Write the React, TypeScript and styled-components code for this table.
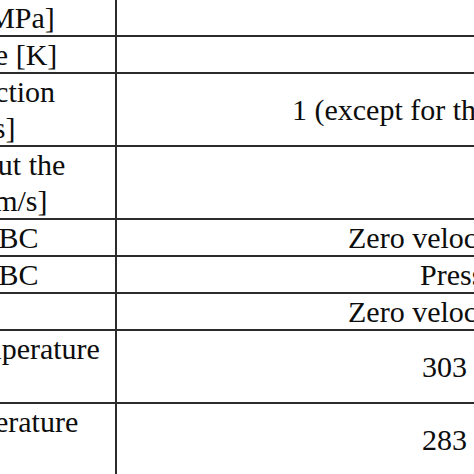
import styled, { createGlobalStyle } from 'styled-components';

const GlobalStyle = createGlobalStyle`
  html, body {
    margin: 0;
    padding: 0;
    background: #fff;
    overflow: hidden;
  }
`;

const Table = styled.div`
  width: 474px;
  height: 474px;
  overflow: hidden;
  display: flex;
  flex-direction: column;
  font-family: 'Liberation Serif', 'Times New Roman', serif;
  font-size: 30px;
  line-height: 35.5px;
  color: #0d0d0d;
`;

const Row = styled.div<{ $lines: number }>`
  display: grid;
  grid-template-columns: 117px 1fr;
  flex: none;
  height: ${(p) => p.$lines * 36 - 1}px;
  border-bottom: 2px solid #2b2b2b;
`;

const LabelCell = styled.div`
  border-right: 2px solid #2b2b2b;
  overflow: hidden;
  display: flex;
  flex-direction: column;
`;

const ValueCell = styled.div`
  overflow: hidden;
  display: flex;
  flex-direction: column;
  justify-content: center;
`;

const Line = styled.span<{ $x: number }>`
  display: block;
  white-space: nowrap;
  margin-left: ${(p) => p.$x}px;
`;

type TableRow = {
  lines: number;
  label: { text: string; x: number }[];
  value?: { text: string; x: number };
};

// x is where the line of text starts on the page; the cells clip the rest
const rows: TableRow[] = [
  { lines: 1, label: [{ text: 'Pressure [MPa]', x: -131 }] },
  { lines: 1, label: [{ text: 'Temperature [K]', x: -143 }] },
  {
    lines: 2,
    label: [
      { text: 'Inflow direction', x: -139 },
      { text: 'velocity [m/s]', x: -152 },
    ],
    value: { text: '1 (except for the inlet)', x: 294 },
  },
  {
    lines: 2,
    label: [
      { text: 'Velocity about the', x: -153 },
      { text: 'velocity [m/s]', x: -120 },
    ],
  },
  { lines: 1, label: [{ text: 'Inlet BC', x: -64 }], value: { text: 'Zero velocity gradient', x: 350 } },
  { lines: 1, label: [{ text: 'Outlet BC', x: -84 }], value: { text: 'Pressure outlet', x: 422 } },
  { lines: 1, label: [], value: { text: 'Zero velocity gradient', x: 350 } },
  { lines: 2, label: [{ text: 'Hot wall temperature', x: -155 }], value: { text: '303', x: 424 } },
  { lines: 2, label: [{ text: 'Cold wall temperature', x: -190 }], value: { text: '283', x: 424 } },
];

const LABEL_WIDTH = 119;

const App: React.FC = () => {
  return (
    <>
      <GlobalStyle />
      <Table>
        {rows.map((row, index) => (
          <Row key={index} $lines={row.lines}>
            <LabelCell>
              {row.label.map((line, lineIndex) => (
                <Line key={lineIndex} $x={line.x}>
                  {line.text}
                </Line>
              ))}
            </LabelCell>
            <ValueCell>
              {row.value && <Line $x={row.value.x - LABEL_WIDTH}>{row.value.text}</Line>}
            </ValueCell>
          </Row>
        ))}
      </Table>
    </>
  );
};

export default App;
